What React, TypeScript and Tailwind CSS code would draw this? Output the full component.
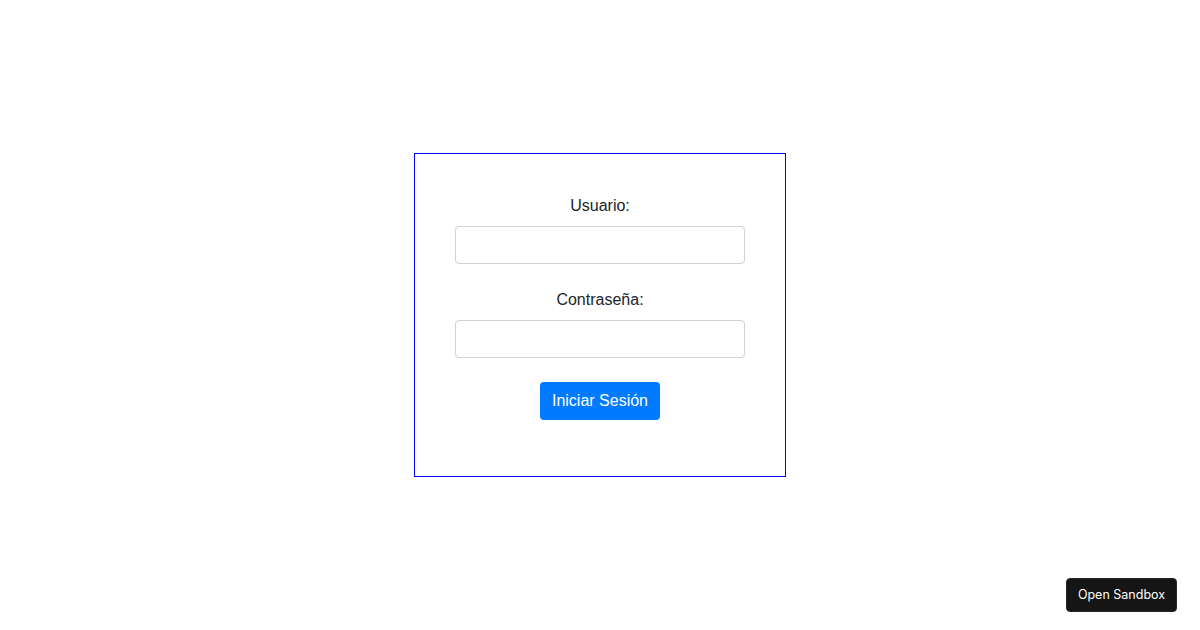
import React from "react";

export default function App() {
  return (
    <div className="relative w-full h-[630px] bg-white flex items-center justify-center" style={{ fontFamily: '"Liberation Sans", Arial, sans-serif' }}>
      <div className="w-[372px] border border-[#0000ff] p-10 flex flex-col items-center text-[#212529]">
        <label className="text-base leading-6 mb-2">Usuario:</label>
        <input type="text" className="w-[290px] h-[38px] border border-[#ced4da] rounded-[4px] px-3 outline-none" />
        <label className="text-base leading-6 mb-2 mt-6">Contraseña:</label>
        <input type="password" className="w-[290px] h-[38px] border border-[#ced4da] rounded-[4px] px-3 outline-none" />
        <button className="mt-6 mb-4 h-[38px] w-[120px] rounded-[4px] bg-[#007bff] text-white text-base leading-6">
          Iniciar Sesión
        </button>
      </div>
      <div
        className="absolute right-[23px] bottom-[18px] h-[34px] w-[111px] rounded-[4px] bg-[#151515] border border-[#2a2a2a] flex items-center justify-center pt-[1px] text-[12.5px] text-white"
        style={{ fontFamily: 'Inter, "Liberation Sans", sans-serif' }}
      >
        Open Sandbox
      </div>
    </div>
  );
}
